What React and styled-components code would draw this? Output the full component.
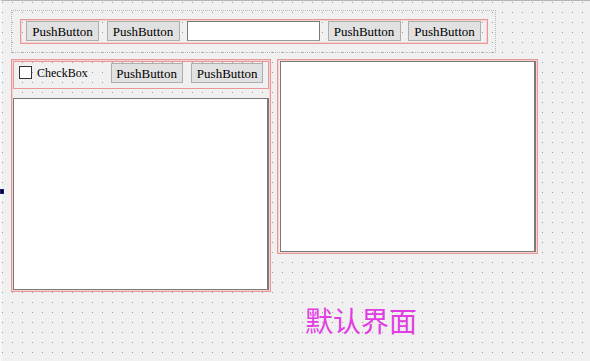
import React from 'react'
import styled, { createGlobalStyle } from 'styled-components';

const GlobalStyle = createGlobalStyle`
    html, body{
        margin: 0;
        padding: 0;
        background: #f0f0f0;
        overflow: hidden;
    }
    *{
        box-sizing: border-box;
    }
`;

const pushFont = `"Liberation Serif", "Times New Roman", serif`;

function PushButton({ width = 73 }) {
    return <ButtonStyled $width={width}>PushButton</ButtonStyled>
}

function App() {
    return (
        <>
            <GlobalStyle />
            <CanvasStyled>
                <Marker />
                <LayoutFrame>
                    <RedFrame className="top-row">
                        <PushButton />
                        <PushButton />
                        <LineEdit readOnly value="" />
                        <PushButton />
                        <PushButton />
                    </RedFrame>
                </LayoutFrame>

                <MiddleRow>
                    <LeftGroup>
                        <CheckRow>
                            <CheckItem>
                                <span className="box"></span>
                                <span>CheckBox</span>
                            </CheckItem>
                            <PushButton width={72} />
                            <PushButton width={72} />
                        </CheckRow>
                        <TextEdit />
                    </LeftGroup>
                    <RightGroup>
                        <TextEdit />
                    </RightGroup>
                </MiddleRow>

                <Caption>默认界面</Caption>
            </CanvasStyled>
        </>
    )
}

const CanvasStyled = styled.div`
    position: relative;
    width: 590px;
    height: 361px;
    padding: 9px 0 0 11px;
    border-top: 1px solid #b4b4b4;
    border-left: 2px solid #f7f7f7;
    background-color: #f0f0f0;
    background-image: conic-gradient(at 1px 1px, transparent 270deg, #9c9c9c 0);
    background-size: 10px 10px;
    background-position: 0px 1px;
    font-family: ${pushFont};
`;

const Marker = styled.div`
    position: absolute;
    left: -2px;
    top: 188px;
    width: 4px;
    height: 5px;
    background: #000;
    border: 1px solid #1a1a8c;
`;

const LayoutFrame = styled.div`
    width: 485px;
    height: 43px;
    margin-left: -2px;
    border: 1px dotted #b8b8b8;
    padding: 8px 0 0 8px;
`;

const RedFrame = styled.div`
    border: 1px solid #e79797;
    box-shadow: inset 0 0 0 1px #f6d2d2;
    &.top-row{
        width: 468px;
        height: 25px;
        display: flex;
        align-items: flex-start;
        gap: 7.5px;
        padding: 1px 0 0 5px;
    }
`;

const ButtonStyled = styled.div`
    width: ${p => p.$width}px;
    height: 20px;
    flex-shrink: 0;
    display: flex;
    align-items: center;
    justify-content: center;
    background: #e1e1e1;
    border: 1px solid #adadad;
    font-family: ${pushFont};
    font-size: 13px;
    color: #000;
    padding-top: 1px;
`;

const LineEdit = styled.input`
    width: 133px;
    height: 20px;
    flex-shrink: 0;
    margin: 0;
    padding: 0;
    background: #fff;
    border: 1px solid #7a7a7a;
    border-bottom-color: #9a9a9a;
    outline: none;
`;

const MiddleRow = styled.div`
    display: flex;
    align-items: flex-start;
    gap: 6px;
    margin-top: 6px;
    margin-left: -2px;
`;

const LeftGroup = styled.div`
    width: 260px;
    height: 233px;
    display: flex;
    flex-direction: column;
    padding: 1px;
    border: 1px solid #e79797;
    box-shadow: inset 0 0 0 1px #f6d2d2;
`;

const CheckRow = styled.div`
    height: 28px;
    display: flex;
    align-items: center;
    gap: 8.6px;
    padding: 0 0 4px 5px;
    border: 1px solid #e79797;
    margin-bottom: 9px;
`;

const CheckItem = styled.div`
    width: 83px;
    display: flex;
    align-items: center;
    gap: 5px;
    font-size: 12px;
    .box{
        width: 13px;
        height: 13px;
        background: #fff;
        border: 1px solid #333;
        margin-top: -1px;
    }
`;

const TextEdit = styled.div`
    flex: 1;
    width: 100%;
    background: #fff;
    border: 1px solid #7a7a7a;
    border-width: 1px 2px 1px 1px;
`;

const RightGroup = styled.div`
    width: 261px;
    height: 195px;
    display: flex;
    padding: 1px 1px 1px 2px;
    border: 1px solid #e79797;
    box-shadow: inset 0 0 0 1px #f6d2d2;
`;

const Caption = styled.div`
    margin: 12px 0 0 292px;
    font-family: "Noto Sans CJK SC", sans-serif;
    font-size: 28px;
    line-height: 32px;
    color: #e23de2;
`;

export default App;
